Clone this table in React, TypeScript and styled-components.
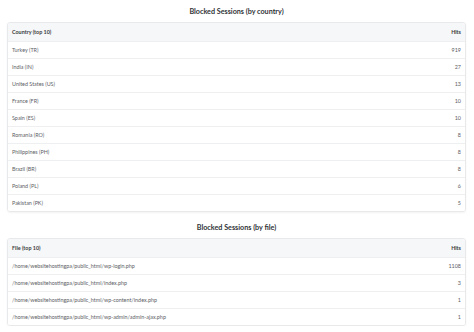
import React from "react";
import styled, { createGlobalStyle } from "styled-components";

const Global = createGlobalStyle`
  html, body { margin: 0; padding: 0; background: #ffffff; }
  body { font-family: Lato, "Open Sans", sans-serif; }
`;

const Page = styled.div`
  width: 474px;
  padding: 0 8px 0 7px;
  box-sizing: border-box;
  display: flex;
  flex-direction: column;
`;

const Section = styled.section<{ $gap?: number }>`
  display: flex;
  flex-direction: column;
  margin-top: ${(p) => p.$gap ?? 0}px;
`;

const Title = styled.h2`
  margin: 0;
  height: 22px;
  display: flex;
  align-items: center;
  justify-content: center;
  font-size: 7.2px;
  font-weight: 700;
  color: #2f3337;
`;

const Card = styled.div`
  border: 1px solid #e8e9eb;
  border-radius: 3px;
  box-shadow: 0 1px 2px rgba(0, 0, 0, 0.05);
  overflow: hidden;
`;

const Row = styled.div<{ $head?: boolean }>`
  display: flex;
  align-items: center;
  justify-content: space-between;
  height: ${(p) => (p.$head ? 17.5 : 17.1)}px;
  padding: 0 4px 0 4px;
  box-sizing: border-box;
  background: ${(p) => (p.$head ? "#f6f7f8" : "#ffffff")};
  font-size: 5.4px;
  font-weight: ${(p) => (p.$head ? 700 : 400)};
  color: ${(p) => (p.$head ? "#3a3d40" : "#5d6166")};
  & + & {
    border-top: 1px solid #eeeff1;
  }
`;

const Cell = styled.span``;

const countries: [string, number][] = [
  ["Turkey (TR)", 919],
  ["India (IN)", 27],
  ["United States (US)", 13],
  ["France (FR)", 10],
  ["Spain (ES)", 10],
  ["Romania (RO)", 8],
  ["Philippines (PH)", 8],
  ["Brazil (BR)", 8],
  ["Poland (PL)", 6],
  ["Pakistan (PK)", 5],
];

const files: [string, number][] = [
  ["/home/websitehostingpa/public_html/wp-login.php", 1108],
  ["/home/websitehostingpa/public_html/index.php", 3],
  ["/home/websitehostingpa/public_html/wp-content/index.php", 1],
  ["/home/websitehostingpa/public_html/wp-admin/admin-ajax.php", 1],
];

const Table = ({ head, rows }: { head: string; rows: [string, number][] }) => (
  <Card>
    <Row $head>
      <Cell>{head}</Cell>
      <Cell>Hits</Cell>
    </Row>
    {rows.map(([name, hits]) => (
      <Row key={name}>
        <Cell>{name}</Cell>
        <Cell>{hits}</Cell>
      </Row>
    ))}
  </Card>
);

export default function App() {
  return (
    <>
      <Global />
      <Page>
        <Section>
          <Title>Blocked Sessions (by country)</Title>
          <Table head="Country (top 10)" rows={countries} />
        </Section>
        <Section $gap={4}>
          <Title>Blocked Sessions (by file)</Title>
          <Table head="File (top 10)" rows={files} />
        </Section>
      </Page>
    </>
  );
}
